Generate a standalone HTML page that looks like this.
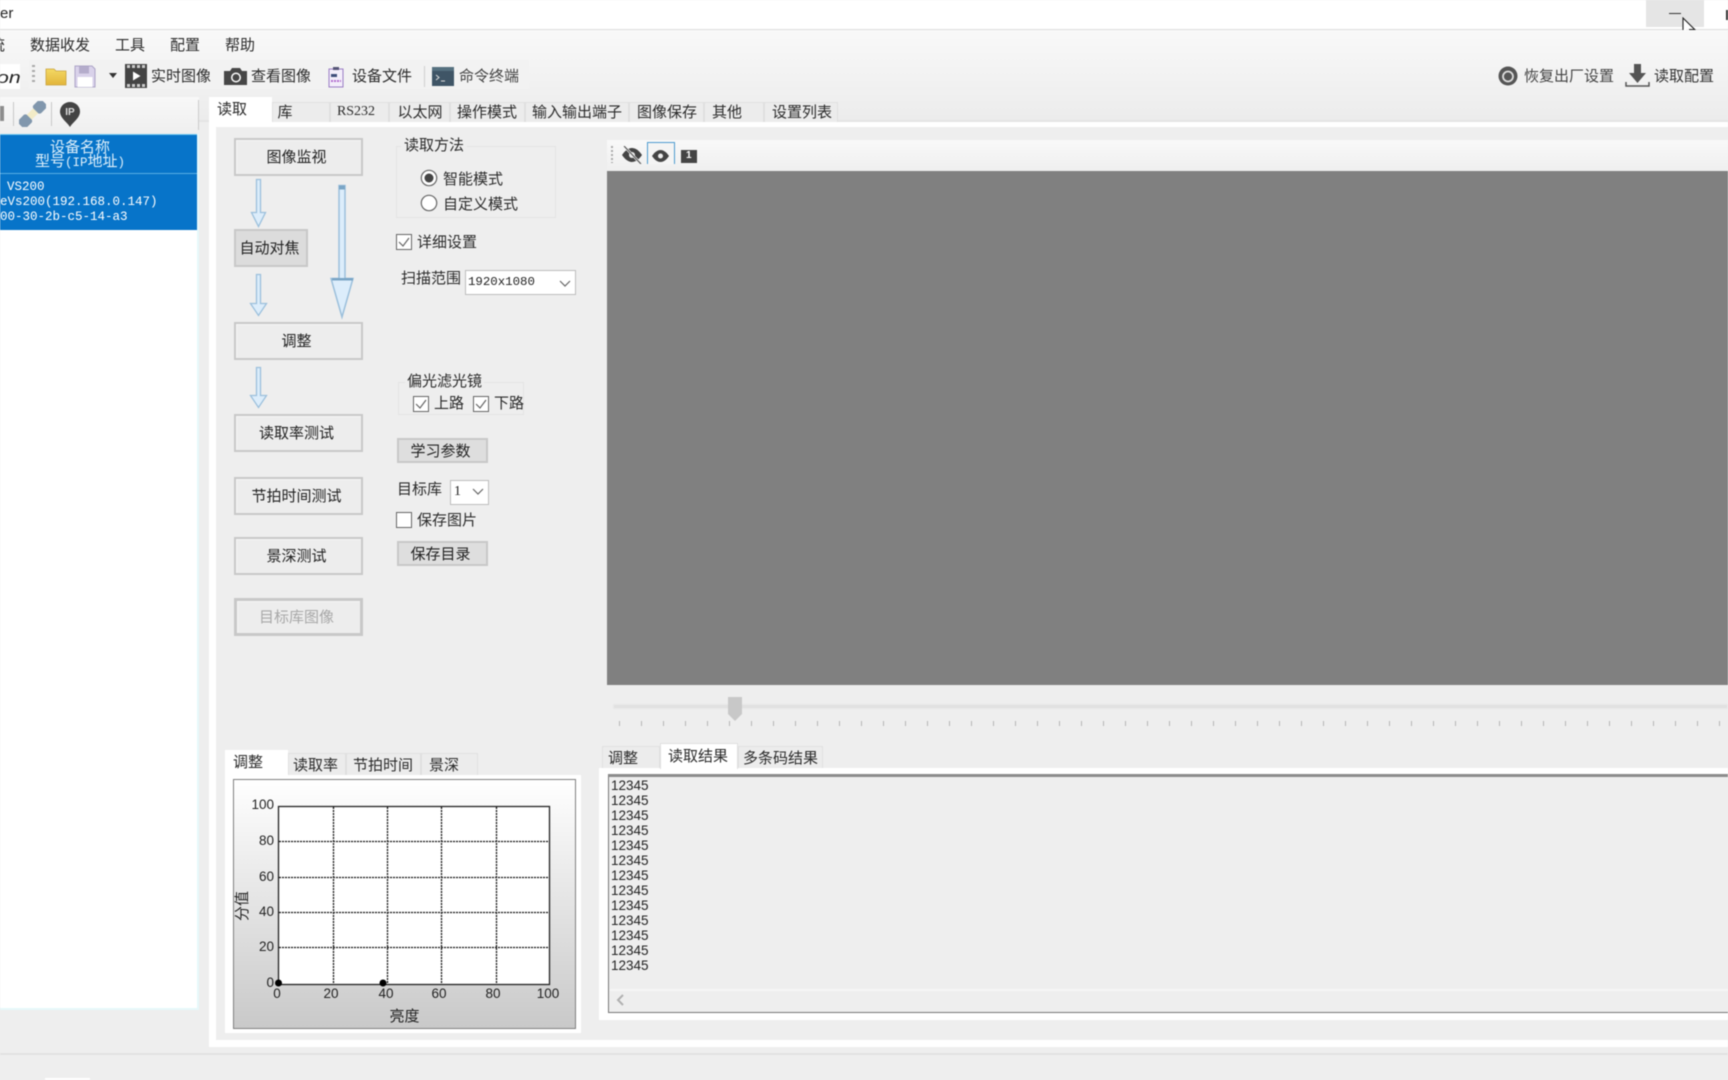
<!DOCTYPE html>
<html lang="zh"><head><meta charset="utf-8"><title>er</title>
<style>
html,body{margin:0;padding:0;width:1728px;height:1080px;overflow:hidden;background:#eee}
body{position:relative;font-family:"Liberation Sans","Noto Sans CJK SC",sans-serif;color:#2b2b2b}
#w{left:0;top:0;width:1728px;height:1080px;background:#eee;filter:blur(.4px);overflow:hidden}
div,span,svg{position:absolute;box-sizing:border-box}
span.i{position:static}
.t{white-space:nowrap;height:20px;line-height:20px;font-size:15px;font-family:"Noto Sans CJK SC","Liberation Sans",sans-serif;}
.c{transform:translateX(-50%)}
.b{background:#ededed;border:2px solid #c8c8c8;text-align:center;font-family:"Noto Sans CJK SC",sans-serif;font-size:15px;color:#222;padding-right:4px;box-shadow:inset 1px 1px 0 #f6f6f6}
.tab{background:#ececec;border:1px solid #e0e0e0;border-bottom:0}
.cb{width:16px;height:16px;border:1.5px solid #666;background:#fff}
.m{font-family:"Liberation Mono",monospace;font-size:12.5px;white-space:nowrap;color:#fff;height:16px;line-height:16px}
.n{font-family:"Liberation Sans",sans-serif;font-size:13.5px;white-space:nowrap;color:#222;height:16px;line-height:16px}
.g{border:1.5px solid #e3e3e3}
.sel{background:#fff;border:1.5px solid #bdbdbd}
</style></head><body><div id="w">

<!-- title bar -->
<div style="left:0;top:0;width:1728px;height:29px;background:#fff"></div>
<div style="left:0;top:29px;width:1728px;height:1px;background:#dcdcdc"></div>
<div class="t" style="left:0;top:4px;font-family:'Liberation Sans',sans-serif;color:#222">er</div>
<div style="left:1646px;top:0;width:58px;height:27px;background:#e5e5e5"></div>
<div style="left:1669px;top:13px;width:12px;height:1px;background:#333"></div>
<div style="left:1726px;top:10px;width:2px;height:10px;background:#333"></div>
<svg style="left:1681px;top:17px" width="16" height="22" viewBox="0 0 16 22"><path d="M2 1v16l4-3.500 2.600 6 2.600-1.100-2.600-5.800h5.200z" fill="#fff" stroke="#222" stroke-width="1.100"/></svg>

<!-- menu + toolbar background -->
<div style="left:0;top:30px;width:1728px;height:90px;background:linear-gradient(#f9f9f9,#ececec)"></div>
<div style="left:0;top:120px;width:1728px;height:2px;background:#e4e4e4"></div>
<div class="t" style="left:-10px;top:35px">统</div>
<div class="t" style="left:30px;top:35px">数据收发</div>
<div class="t" style="left:115px;top:35px">工具</div>
<div class="t" style="left:170px;top:35px">配置</div>
<div class="t" style="left:225px;top:35px">帮助</div>

<!-- toolbar -->
<div style="left:0;top:64px;width:20px;height:25px;background:#fff"></div>
<div class="t" style="left:-3px;top:68px;font-family:'Liberation Sans',sans-serif;font-style:italic;font-size:17px;color:#222;transform:scaleX(1.25);transform-origin:0 50%">on</div>
<div style="left:29px;top:60px;width:500px;height:29px;background:#f2f2f2"></div>
<div style="left:32px;top:65px;width:3px;height:20px;background:repeating-linear-gradient(#a8a8a8 0 2px,transparent 2px 5px)"></div>
<svg style="left:45px;top:67px" width="22" height="19" viewBox="0 0 22 19"><defs><linearGradient id="fg" x1="0" y1="0" x2="0" y2="1"><stop offset="0" stop-color="#f4d964"/><stop offset="1" stop-color="#e2b53a"/></linearGradient></defs><path d="M1 2h8l2 2h10v14H1z" fill="url(#fg)" stroke="#c9a23c" stroke-width=".8"/></svg>
<svg style="left:74px;top:65px" width="22" height="23" viewBox="0 0 22 23"><path d="M1 1h17l3 3v18H1z" fill="#d9d2ea" stroke="#aca4c6"/><rect x="5" y="1.500" width="10" height="7" fill="#b4accb"/><rect x="3.500" y="12" width="15" height="10" fill="#fff"/></svg>
<svg style="left:109px;top:73px" width="8" height="5" viewBox="0 0 8 5"><path d="M0 0h8l-4 5z" fill="#333"/></svg>
<svg style="left:125px;top:64px" width="22" height="24" viewBox="0 0 22 24"><rect width="22" height="24" fill="#444"/><path d="M2 1h3v3H2zM7 1h3v3H7zM12 1h3v3h-3zM17 1h3v3h-3zM2 20h3v3H2zM7 20h3v3H7zM12 20h3v3h-3zM17 20h3v3h-3z" fill="#ccc"/><path d="M8 7.500l7.500 4.500-7.500 4.500z" fill="#fff"/></svg>
<div class="t" style="left:151px;top:66px">实时图像</div>
<svg style="left:223px;top:67px" width="25" height="19" viewBox="0 0 25 19"><path d="M1 4h6l2-3h8l2 3h5v14H1z" fill="#474747"/><circle cx="13" cy="10.500" r="5" fill="#fff"/><circle cx="13" cy="10.500" r="3.500" fill="#474747"/></svg>
<div class="t" style="left:251px;top:66px">查看图像</div>
<svg style="left:328px;top:66px" width="16" height="22" viewBox="0 0 16 22"><rect x="1" y="3" width="14" height="18" fill="#f3eefa" stroke="#9a7cc4"/><rect x="5" y="1" width="6" height="3" fill="#557"/><rect x="3" y="8" width="6" height="3" fill="#3f4f7a"/><path d="M3 15h10" stroke="#b46fd0" stroke-width="2" stroke-dasharray="2 1"/></svg>
<div class="t" style="left:352px;top:66px">设备文件</div>
<div style="left:424px;top:66px;width:1px;height:21px;background:#cfcfcf"></div>
<svg style="left:432px;top:67px" width="22" height="19" viewBox="0 0 22 19"><rect width="22" height="19" fill="#3f5566"/><rect width="22" height="4" fill="#55707f"/><path d="M4 8l3 2.500-3 2.500M9 14h4" stroke="#ddd" fill="none"/></svg>
<div class="t" style="left:459px;top:66px;color:#444">命令终端</div>

<!-- toolbar right -->
<svg style="left:1498px;top:66px" width="20" height="20" viewBox="0 0 20 20"><circle cx="10" cy="10" r="9.500" fill="#555"/><circle cx="10" cy="10.500" r="5" fill="none" stroke="#ddd" stroke-width="1.800"/></svg>
<div class="t" style="left:1524px;top:66px;color:#444">恢复出厂设置</div>
<svg style="left:1625px;top:64px" width="25" height="24" viewBox="0 0 25 24"><path d="M9 0h7v9h5l-8.500 10L4 9h5z" fill="#555"/><path d="M1 18v4h23v-4" fill="none" stroke="#555" stroke-width="1.500"/></svg>
<div class="t" style="left:1654px;top:66px;color:#333">读取配置</div>

<!-- left panel -->
<div style="left:0;top:97px;width:199px;height:37px;background:linear-gradient(#f8f8f8,#efefef)"></div>
<div style="left:198px;top:100px;width:1px;height:30px;background:#ccc"></div>
<div style="left:13px;top:102px;width:1px;height:24px;background:#c8c8c8"></div>
<div style="left:51px;top:102px;width:1px;height:24px;background:#c8c8c8"></div>
<div style="left:0;top:106px;width:4px;height:15px;background:#8d8d8d"></div>
<svg style="left:19px;top:101px" width="27" height="26" viewBox="0 0 27 26"><g transform="rotate(-45 13.500 13)"><rect x="-3" y="7.500" width="12" height="11" rx="2.500" fill="#8197ad"/><rect x="18" y="7.500" width="12" height="11" rx="2.500" fill="#8197ad"/><rect x="9" y="9.500" width="9" height="7" fill="#f3ecc8"/></g></svg>
<svg style="left:60px;top:102px" width="20" height="25" viewBox="0 0 20 25"><path d="M10 25C7 20 0 16 0 9.500a10 9.500 0 0 1 20 0C20 16 13 20 10 25z" fill="#444"/><text x="10" y="13" font-family="Liberation Sans" font-size="10" font-weight="700" fill="#ddd" text-anchor="middle">IP</text></svg>
<div style="left:0;top:134px;width:199px;height:876px;background:#fff;border-right:2px solid #e6f8fa;border-bottom:2px solid #e6f8fa"></div>
<div style="left:0;top:134px;width:197px;height:96px;background:#0774c9;border-top:1px solid #6cc6f0"></div>
<div style="left:0;top:173px;width:197px;height:1px;background:#58aee4"></div>
<div class="t c" style="left:80px;top:138px;color:#dff0fb;line-height:18px">设备名称</div>
<div class="t c" style="left:80px;top:152px;color:#dff0fb;line-height:18px">型号<span class="i" style="font-family:'Liberation Mono',monospace;font-size:12.500px">(IP</span>地址<span class="i" style="font-family:'Liberation Mono',monospace;font-size:12.500px">)</span></div>
<div class="m" style="left:7px;top:179px">VS200</div>
<div class="m" style="left:0;top:194px">eVs200(192.168.0.147)</div>
<div class="m" style="left:0;top:209px">00-30-2b-c5-14-a3</div>

<!-- page -->
<div style="left:209px;top:122px;width:1519px;height:925px;background:#eee;border-left:7px solid #fff;border-top:5px solid #fff;border-bottom:7px solid #fff"></div>
<div style="left:0;top:1053px;width:1728px;height:2px;background:#e2e2e2"></div>
<div style="left:45px;top:1078px;width:45px;height:2px;background:#fff"></div>

<!-- main tabs -->
<div class="tab" style="left:272px;top:102px;width:58px;height:20px"></div>
<div class="tab" style="left:330px;top:102px;width:59px;height:20px"></div>
<div class="tab" style="left:389px;top:102px;width:61px;height:20px"></div>
<div class="tab" style="left:450px;top:102px;width:75px;height:20px"></div>
<div class="tab" style="left:525px;top:102px;width:104px;height:20px"></div>
<div class="tab" style="left:629px;top:102px;width:75px;height:20px"></div>
<div class="tab" style="left:704px;top:102px;width:60px;height:20px"></div>
<div class="tab" style="left:764px;top:102px;width:74px;height:20px"></div>
<div style="left:209px;top:97px;width:63px;height:30px;background:#fff"></div>
<div class="t c" style="left:232px;top:99px">读取</div>
<div class="t c" style="left:285px;top:102px">库</div>
<div class="t c" style="left:356px;top:102px;font-family:'Liberation Serif',serif;font-size:14px">RS232</div>
<div class="t c" style="left:420px;top:102px">以太网</div>
<div class="t c" style="left:487px;top:102px">操作模式</div>
<div class="t c" style="left:577px;top:102px">输入输出端子</div>
<div class="t c" style="left:667px;top:102px">图像保存</div>
<div class="t c" style="left:727px;top:102px">其他</div>
<div class="t c" style="left:802px;top:102px">设置列表</div>

<!-- left buttons -->
<div class="b" style="left:234px;top:138px;width:129px;height:38px;line-height:34px">图像监视</div>
<div class="b" style="left:234px;top:229px;width:74px;height:38px;line-height:34px;background:#dcdcdc;padding-right:3px;box-shadow:none">自动对焦</div>
<div class="b" style="left:234px;top:322px;width:129px;height:38px;line-height:34px">调整</div>
<div class="b" style="left:234px;top:414px;width:129px;height:38px;line-height:34px">读取率测试</div>
<div class="b" style="left:234px;top:477px;width:129px;height:38px;line-height:34px">节拍时间测试</div>
<div class="b" style="left:234px;top:537px;width:129px;height:38px;line-height:34px">景深测试</div>
<div class="b" style="left:234px;top:598px;width:129px;height:38px;line-height:32px;border-width:3px;border-color:#c8c8c8;color:#a8a8a8">目标库图像</div>

<!-- arrows -->
<svg style="left:239px;top:170px" width="130" height="245" viewBox="0 0 130 245">
<g fill="#dcedfb" stroke="#9cc0dc" stroke-width="1.300">
<path d="M17.500 9.500h4v33h5l-7 14-7-14h5z"/>
<path d="M17.500 104.500h4v29h6l-8 12-8-12h6z"/>
<path d="M17.500 197.500h4v28h6l-8 12-8-12h6z"/>
<path d="M100 15.500h6v93h8l-11 38.500-11-38.500h8z" stroke-width="1.500"/>
</g>
<path d="M100 15.500h6v4h-6zM93 108h21v2.500h-21z" fill="#7aa5c6"/>
</svg>

<!-- read method -->
<div class="g" style="left:396px;top:146px;width:160px;height:72px"></div>
<div class="t" style="left:401px;top:135px;background:#eee;padding:0 3px">读取方法</div>
<svg style="left:420px;top:169px" width="18" height="44" viewBox="0 0 18 44"><circle cx="9" cy="9" r="7.700" fill="#fff" stroke="#666" stroke-width="1.200"/><circle cx="9" cy="9" r="4.500" fill="#444"/><circle cx="9" cy="34" r="7.700" fill="#fff" stroke="#666" stroke-width="1.200"/></svg>
<div class="t" style="left:443px;top:169px">智能模式</div>
<div class="t" style="left:443px;top:194px">自定义模式</div>

<div class="cb" style="left:396px;top:234px"><svg style="left:1px;top:1px" width="12" height="12" viewBox="0 0 12 12"><path d="M1 6l4 4 6-8" fill="none" stroke="#666" stroke-width="1.200"/></svg></div>
<div class="t" style="left:417px;top:232px">详细设置</div>
<div class="t" style="left:401px;top:268px">扫描范围</div>
<div class="sel" style="left:465px;top:270px;width:111px;height:25px"></div>
<div class="m" style="left:468px;top:274px;color:#222;font-size:12.400px">1920x1080</div>
<svg style="left:559px;top:280px" width="12" height="7" viewBox="0 0 12 7"><path d="M1 1l5 5 5-5" fill="none" stroke="#666" stroke-width="1.200"/></svg>

<div class="g" style="left:398px;top:382px;width:126px;height:33px"></div>
<div class="t" style="left:405px;top:371px;background:#eee;padding:0 2px;height:20px">偏光滤光镜</div>
<div class="cb" style="left:413px;top:396px"><svg style="left:1px;top:1px" width="12" height="12" viewBox="0 0 12 12"><path d="M1 6l4 4 6-8" fill="none" stroke="#666" stroke-width="1.200"/></svg></div>
<div class="t" style="left:434px;top:393px">上路</div>
<div class="cb" style="left:473px;top:396px"><svg style="left:1px;top:1px" width="12" height="12" viewBox="0 0 12 12"><path d="M1 6l4 4 6-8" fill="none" stroke="#666" stroke-width="1.200"/></svg></div>
<div class="t" style="left:494px;top:393px">下路</div>

<div class="b" style="left:397px;top:438px;width:91px;height:25px;line-height:21px;background:#dedede;box-shadow:none">学习参数</div>
<div class="t" style="left:397px;top:479px">目标库</div>
<div class="sel" style="left:450px;top:480px;width:39px;height:25px"></div>
<div class="m" style="left:454px;top:484px;color:#222;font-family:'Liberation Serif',serif;font-size:14px">1</div>
<svg style="left:472px;top:488px" width="12" height="7" viewBox="0 0 12 7"><path d="M1 1l5 5 5-5" fill="none" stroke="#666" stroke-width="1.200"/></svg>
<div class="cb" style="left:396px;top:512px"></div>
<div class="t" style="left:417px;top:510px">保存图片</div>
<div class="b" style="left:397px;top:541px;width:91px;height:25px;line-height:21px;background:#dedede;box-shadow:none">保存目录</div>

<!-- viewer -->
<div style="left:607px;top:140px;width:1121px;height:31px;background:linear-gradient(#f9f9f9,#efefef)"></div>
<div style="left:611px;top:146px;width:2px;height:17px;background:repeating-linear-gradient(#aaa 0 2px,transparent 2px 4px)"></div>
<svg style="left:621px;top:146px" width="22" height="18" viewBox="0 0 22 18"><path d="M1 9C5 3 9 2 11 2s6 1 10 7c-4 6-8 7-10 7S5 15 1 9z" fill="#444"/><circle cx="11" cy="9" r="3" fill="#eee"/><path d="M3 0l17 18" stroke="#eee" stroke-width="2.500"/><path d="M3 0l17 18" stroke="#555" stroke-width="1.100"/></svg>
<div style="left:647px;top:142px;width:28px;height:22px;border:1px solid #4d9bcf;border-bottom:0;background:#f4f4f4"></div>
<svg style="left:651px;top:149px" width="19" height="14" viewBox="0 0 19 14"><path d="M1 7c3-4.500 6-6 8.500-6s5.500 1.500 8.500 6c-3 4.500-6 6-8.500 6S4 11.500 1 7z" fill="#444"/><circle cx="9.500" cy="7" r="2.500" fill="#eee"/></svg>
<div style="left:681px;top:150px;width:16px;height:13px;background:#444"></div>
<div style="left:686px;top:149px;color:#fff;font-family:'Liberation Sans',sans-serif;font-size:10px;font-weight:700;line-height:14px">1</div>
<div style="left:606.500px;top:171px;width:1122px;height:514px;background:#808080"></div>

<!-- slider -->
<div style="left:613px;top:704px;width:1115px;height:5px;background:#e1e1e1;border:1px solid #e8e8e8"></div>
<svg style="left:728px;top:697px" width="14" height="24" viewBox="0 0 14 24"><path d="M0 0h14v17l-7 7-7-7z" fill="#c8c8c8"/></svg>
<div style="left:619px;top:721px;width:1109px;height:5px;background:repeating-linear-gradient(90deg,#b5b5b5 0 1px,transparent 1px 22px)"></div>

<!-- result tabs -->
<div class="tab" style="left:602px;top:746px;width:58px;height:22px"></div>
<div class="tab" style="left:738px;top:746px;width:85px;height:22px"></div>
<div style="left:599px;top:768px;width:1129px;height:252px;background:#fff"></div>
<div style="left:660px;top:743px;width:78px;height:26px;background:#fff;border:1px solid #e0e0e0;border-bottom:0"></div>
<div class="t" style="left:608px;top:748px">调整</div>
<div class="t" style="left:668px;top:746px">读取结果</div>
<div class="t" style="left:743px;top:748px">多条码结果</div>
<div style="left:608px;top:774px;width:1120px;height:239px;background:#eee;border-top:3px solid #8c8c8c;border-left:1.500px solid #777;border-bottom:1.500px solid #777"></div>
<div style="left:610px;top:989px;width:1118px;height:2px;background:#f6f6f6"></div>
<svg style="left:616px;top:994px" width="9" height="12" viewBox="0 0 9 12"><path d="M7 1L2 6l5 5" fill="none" stroke="#b0b0b0" stroke-width="2"/></svg>
<div class="n" style="left:611px;top:778px">12345</div>
<div class="n" style="left:611px;top:793px">12345</div>
<div class="n" style="left:611px;top:808px">12345</div>
<div class="n" style="left:611px;top:823px">12345</div>
<div class="n" style="left:611px;top:838px">12345</div>
<div class="n" style="left:611px;top:853px">12345</div>
<div class="n" style="left:611px;top:868px">12345</div>
<div class="n" style="left:611px;top:883px">12345</div>
<div class="n" style="left:611px;top:898px">12345</div>
<div class="n" style="left:611px;top:913px">12345</div>
<div class="n" style="left:611px;top:928px">12345</div>
<div class="n" style="left:611px;top:943px">12345</div>
<div class="n" style="left:611px;top:958px">12345</div>

<!-- chart tabs -->
<div class="tab" style="left:288px;top:753px;width:58px;height:22px"></div>
<div class="tab" style="left:346px;top:753px;width:75px;height:22px"></div>
<div class="tab" style="left:421px;top:753px;width:57px;height:22px"></div>
<div style="left:225px;top:750px;width:63px;height:26px;background:#fff"></div>
<div class="t" style="left:233px;top:752px">调整</div>
<div class="t" style="left:293px;top:755px">读取率</div>
<div class="t" style="left:353px;top:755px">节拍时间</div>
<div class="t" style="left:429px;top:755px">景深</div>
<div style="left:225px;top:775px;width:356px;height:258px;background:#fff"></div>

<!-- chart -->
<svg style="left:233px;top:779px" width="343" height="250" viewBox="233 779 343 250">
<defs><linearGradient id="cg" x1="0" y1="0" x2="0" y2="1"><stop offset="0" stop-color="#fff"/><stop offset="1" stop-color="#c9c9c9"/></linearGradient></defs>
<rect x="233.500" y="779.500" width="342" height="249" fill="url(#cg)" stroke="#808080"/>
<rect x="278.500" y="806.500" width="271" height="178" fill="#fff" stroke="#222" stroke-width="1.300"/>
<g stroke="#111" stroke-width="1.300" stroke-dasharray="2 1">
<path d="M333.500 807v177M387.500 807v177M441.500 807v177M496.500 807v177M279 841.500h270M279 877.500h270M279 912.500h270M279 947.500h270"/>
</g>
<circle cx="278.500" cy="983" r="3.500" fill="#000"/><circle cx="383" cy="983" r="3.500" fill="#000"/>
<g font-family="Liberation Sans, sans-serif" font-size="13.500" fill="#222" text-anchor="end">
<text x="274" y="809">100</text><text x="274" y="845">80</text><text x="274" y="881">60</text><text x="274" y="916">40</text><text x="274" y="951">20</text><text x="274" y="987">0</text>
</g>
<g font-family="Liberation Sans, sans-serif" font-size="13.500" fill="#222" text-anchor="middle">
<text x="277" y="998">0</text><text x="331" y="998">20</text><text x="386" y="998">40</text><text x="439" y="998">60</text><text x="493" y="998">80</text><text x="548" y="998">100</text>
</g>
<text x="404.500" y="1021" font-family="Noto Sans CJK SC, sans-serif" font-size="15" fill="#222" text-anchor="middle">亮度</text>
<text transform="translate(247 906) rotate(-90)" font-family="Noto Sans CJK SC, sans-serif" font-size="15" fill="#222" text-anchor="middle">分值</text>
</svg>

</div></body></html>
